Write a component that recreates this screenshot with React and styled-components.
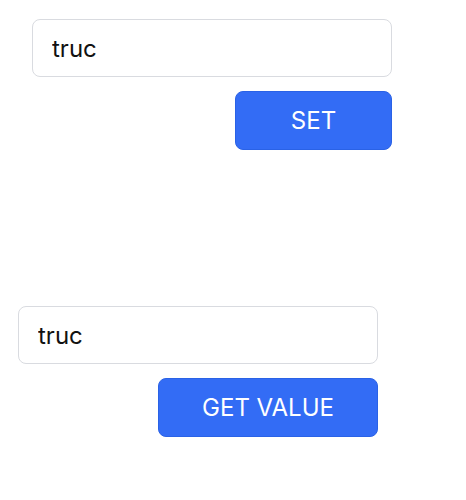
import React from "react";
import styled, { createGlobalStyle } from "styled-components";

const Global = createGlobalStyle`
  html, body {
    margin: 0;
    padding: 0;
    background: #ffffff;
    font-family: Inter, "Noto Sans", sans-serif;
  }
`;

const Page = styled.div`
  display: flex;
  flex-direction: column;
  width: 466px;
  height: 500px;
`;

const Field = styled.div`
  display: flex;
  flex-direction: column;
  align-items: flex-end;
  gap: 14px;
  width: 360px;
  margin-left: ${(p) => p.$left}px;
  margin-top: ${(p) => p.$top}px;
`;

const Input = styled.input`
  box-sizing: border-box;
  width: 100%;
  height: 58px;
  padding: 0 19px;
  border: 1px solid #d9dbe0;
  border-radius: 8px;
  background: #ffffff;
  font-family: Inter, "Noto Sans", sans-serif;
  font-size: 24px;
  color: #111111;
  outline: none;
`;

const Button = styled.button`
  box-sizing: border-box;
  width: ${(p) => p.$width}px;
  height: 59px;
  border: 1px solid #2a62e6;
  border-radius: 8px;
  background: #336cf5;
  color: #ffffff;
  font-family: Inter, "Noto Sans", sans-serif;
  font-size: 24px;
  font-weight: 400;
  cursor: pointer;
`;

export default function App() {
  return (
    <>
      <Global />
      <Page>
        <Field $left={32} $top={19}>
          <Input defaultValue="truc" />
          <Button $width={157}>SET</Button>
        </Field>
        <Field $left={18} $top={156}>
          <Input defaultValue="truc" />
          <Button $width={220}>GET VALUE</Button>
        </Field>
      </Page>
    </>
  );
}
